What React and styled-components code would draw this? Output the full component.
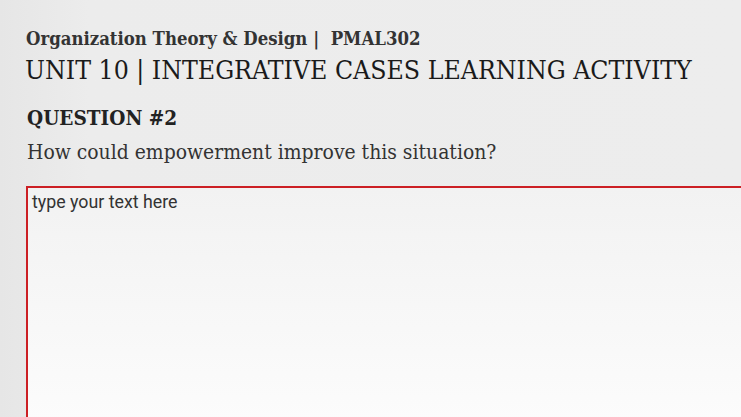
import React from 'react';
import styled, { createGlobalStyle } from 'styled-components';

const GlobalStyle = createGlobalStyle`
  html, body {
    margin: 0;
    padding: 0;
    height: 100%;
    overflow: hidden;
  }
  body {
    background: linear-gradient(90deg, #e6e6e6 0%, #ececec 12%, #ededed 100%);
  }
`;

const Page = styled.div`
  width: 741px;
  height: 417px;
  padding: 27px 0 0 26px;
  box-sizing: border-box;
  overflow: hidden;
  font-family: "DejaVu Serif", "Liberation Serif", serif;
  font-stretch: condensed;
  white-space: nowrap;
`;

const Course = styled.h2`
  margin: 0;
  font-size: 18.4px;
  font-weight: 700;
  color: #333;
  line-height: 24px;
`;

const Unit = styled.h1`
  margin: 3px 0 0 -1px;
  font-size: 26.4px;
  font-weight: 400;
  color: #1a1a1a;
  line-height: 32px;
`;

const Question = styled.h3`
  margin: 19px 0 0 1px;
  font-size: 20.6px;
  font-weight: 700;
  color: #222;
  line-height: 26px;
`;

const Prompt = styled.p`
  margin: 8px 0 0 1px;
  font-size: 20.9px;
  color: #333;
  line-height: 26px;
`;

const Answer = styled.textarea`
  display: block;
  margin-top: 21px;
  width: 760px;
  height: 260px;
  box-sizing: border-box;
  border: 2px solid #cc1f24;
  padding: 3px 4px;
  resize: none;
  outline: none;
  background: linear-gradient(180deg, #f2f2f2 0%, #fdfdfd 100%);
  font-family: Roboto, "Liberation Sans", sans-serif;
  font-size: 17.8px;
  color: #333;

  &::placeholder {
    color: #333;
    opacity: 1;
  }
`;

export default function App() {
  return (
    <>
      <GlobalStyle />
      <Page>
        <Course>Organization Theory &amp; Design |&nbsp; PMAL302</Course>
        <Unit>UNIT 10 | INTEGRATIVE CASES LEARNING ACTIVITY</Unit>
        <Question>QUESTION #2</Question>
        <Prompt>How could empowerment improve this situation?</Prompt>
        <Answer placeholder="type your text here" />
      </Page>
    </>
  );
}
